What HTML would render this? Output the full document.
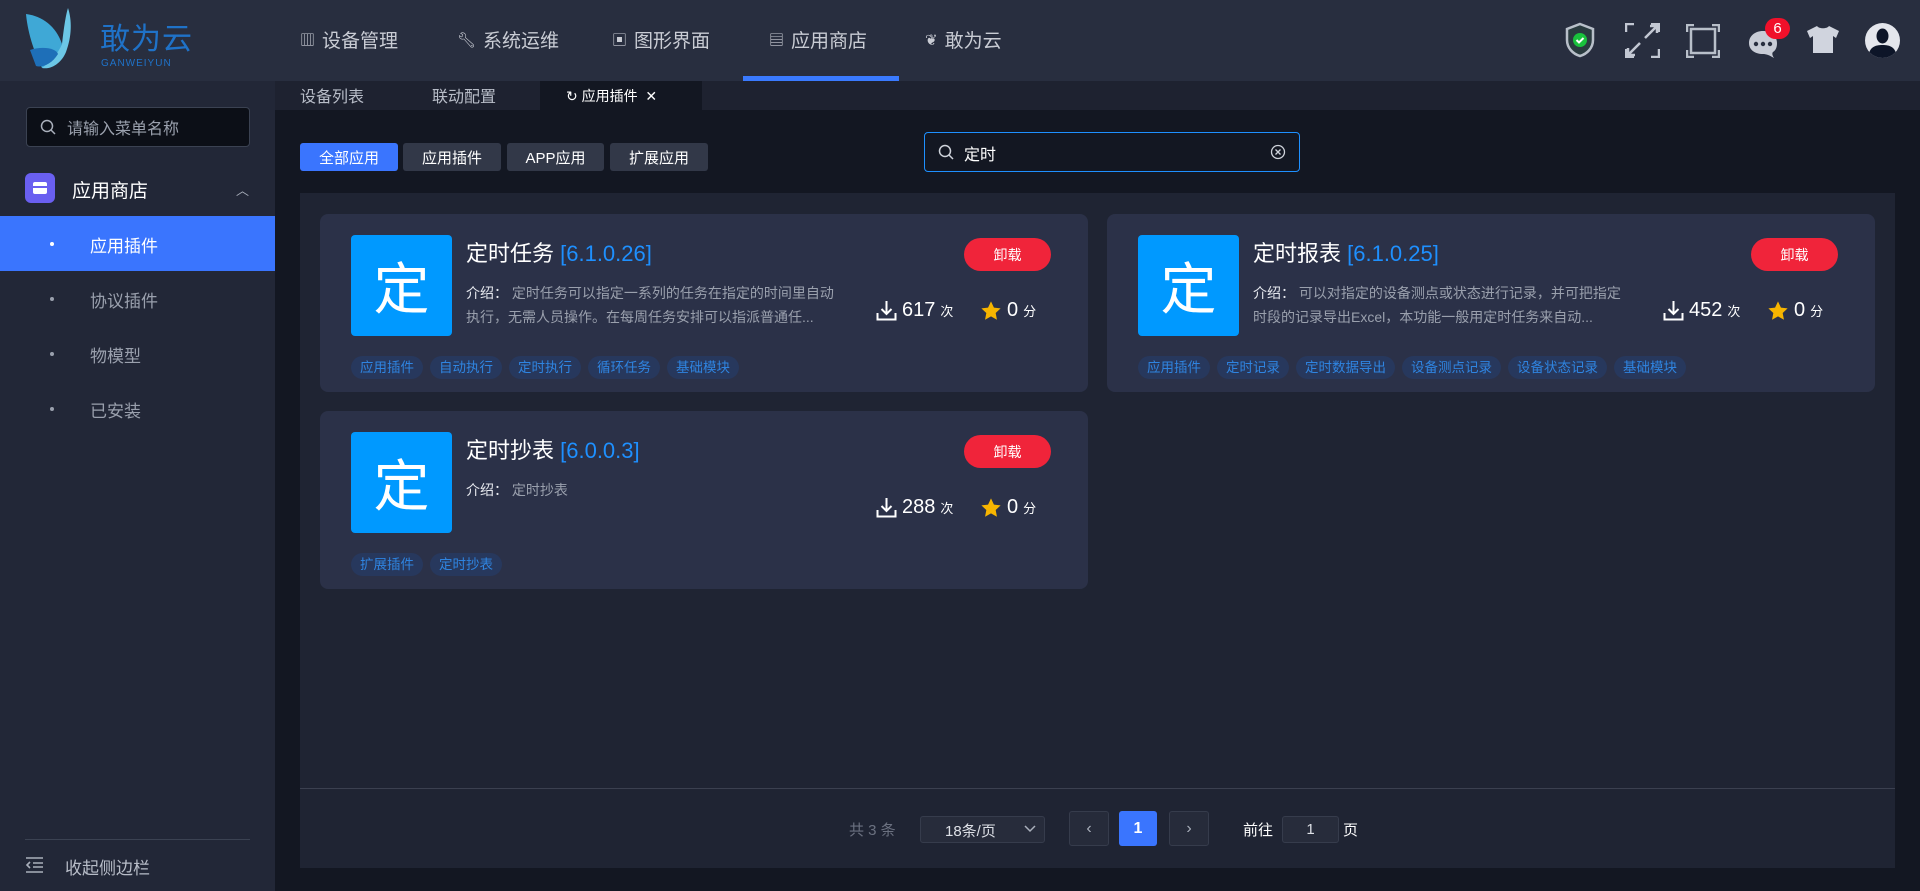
<!DOCTYPE html>
<html><head><meta charset="utf-8">
<style>
*{margin:0;padding:0;box-sizing:border-box}
body{width:1920px;height:891px;overflow:hidden;background:#131722;font-family:"Liberation Sans","Noto Sans CJK SC",sans-serif;color:#fff;position:relative}
.abs{position:absolute}
.top{left:0;top:0;width:1920px;height:81px;background:#282e3f}
.nav{top:26px;font-size:19px;color:#c9ccd4;display:flex;align-items:center;gap:7px}
.side{left:0;top:81px;width:275px;height:810px;background:#222737}
.tabs{left:275px;top:81px;width:1645px;height:29px;background:#1e2230}
.panel{left:300px;top:193px;width:1595px;height:675px;background:#1f2433}
.btn{top:143px;height:28px;border-radius:3px;font-size:15px;display:flex;align-items:center;justify-content:center;background:#323848;color:#fff}
.card{width:768px;height:178px;background:#2b3148;border-radius:8px}
.icon{left:31px;top:21px;width:101px;height:101px;background:#0099ff;border-radius:4px;font-size:56px;display:flex;align-items:center;justify-content:center;color:#fff}
.title{left:146px;top:22px;font-size:22px;white-space:nowrap}
.title span{color:#1e90ff}
.intro{left:146px;top:67px;width:368px;font-size:14px;line-height:24px;color:#9aa0ad}
.intro b{color:#e6e8ee;font-weight:normal}
.un{left:644px;top:24px;width:87px;height:33px;border-radius:17px;background:#f0243a;font-size:14px;display:flex;align-items:center;justify-content:center}
.stat{top:85px;display:flex;align-items:center;font-size:20px;gap:5px}
.stat small{font-size:13px}
.tags{left:31px;top:142px;display:flex;gap:7px}
.tags span{height:23px;line-height:23px;padding:0 9px;border-radius:12px;background:#27385d;color:#2f84e0;font-size:13.5px}
.si{left:50px;font-size:17px;color:#9aa0ad}
.dot{left:50px;width:4px;height:4px;border-radius:2px;background:#9aa0ad}
</style></head><body>
<div class="abs top"></div>
<svg class="abs" style="left:22px;top:6px" width="60" height="66" viewBox="0 0 60 66">
<path d="M4 8 C20 10 34 20 40 38 C36 50 28 60 20 62 C14 50 6 30 4 8Z" fill="#3fa8d6"/>
<path d="M40 38 C42 20 44 8 46 2 C50 14 50 30 44 46 C40 56 30 64 20 62 C28 56 36 48 40 38Z" fill="#6cc7e6"/>
<path d="M8 44 C20 40 34 42 36 48 C30 58 20 62 14 60Z" fill="#1e6fb8"/>
</svg>
<div class="abs" style="left:100px;top:14px;font-size:30px;color:#1f72c8;letter-spacing:1px">敢为云</div>
<div class="abs" style="left:101px;top:58px;font-size:10px;color:#1f72c8;letter-spacing:1px">GANWEIYUN</div>

<div class="abs nav" style="left:300px"><span style="font-size:15px">▥</span>设备管理</div>
<div class="abs nav" style="left:457px"><span style="font-size:15px">🔧︎</span>系统运维</div>
<div class="abs nav" style="left:612px"><span style="font-size:15px">▣</span>图形界面</div>
<div class="abs nav" style="left:769px"><span style="font-size:15px">▤</span>应用商店</div>
<div class="abs nav" style="left:925px"><span style="font-size:15px">❦</span>敢为云</div>
<div class="abs" style="left:743px;top:76px;width:156px;height:5px;background:#3a7afe"></div>

<svg class="abs" style="left:1564px;top:22px" width="32" height="36" viewBox="0 0 32 36"><path d="M16 2 L29 7 V18 C29 26 23 32 16 34 C9 32 3 26 3 18 V7Z" fill="#2a3b3f" stroke="#b8bfc9" stroke-width="2.5"/><circle cx="16" cy="18" r="7" fill="#19c23c"/><path d="M12.5 18 l2.5 2.5 l4.5 -4.5" stroke="#fff" stroke-width="2" fill="none"/></svg>
<svg class="abs" style="left:1625px;top:23px" width="35" height="35" viewBox="0 0 35 35" fill="none" stroke="#c2c7d2" stroke-width="2.5"><path d="M1 9V1h8M26 34h8v-8M1 26v8h8M34 9V1h-8"/><path d="M20 15L32 3M25 3h7v7M15 20L3 32M3 25v7h7"/></svg>
<svg class="abs" style="left:1686px;top:24px" width="34" height="34" viewBox="0 0 34 34" fill="none" stroke="#b8bfc9" stroke-width="2.5"><path d="M1 8V1h7M26 1h7v7M1 26v7h7M33 26v7h-7"/><rect x="5" y="5" width="24" height="24"/></svg>
<svg class="abs" style="left:1748px;top:30px" width="30" height="28" viewBox="0 0 30 28"><path d="M15 1C7 1 1 6 1 13c0 7 6 11 14 11 3 0 6 1 11 4-2-3-2-5-1-6 3-2 4-5 4-9C29 6 23 1 15 1z" fill="#c8ccd6"/><circle cx="8" cy="14" r="2.2" fill="#282e3f"/><circle cx="15" cy="14" r="2.2" fill="#282e3f"/><circle cx="22" cy="14" r="2.2" fill="#282e3f"/></svg>
<div class="abs" style="left:1765px;top:18px;width:25px;height:21px;border-radius:11px;background:#f0102a;font-size:15px;text-align:center;line-height:21px">6</div>
<svg class="abs" style="left:1806px;top:25px" width="34" height="29" viewBox="0 0 34 29"><path d="M11 1 C13 4 21 4 23 1 L33 6 L30 13 L27 11 V28 H7 V11 L4 13 L1 6Z" fill="#d0d4de"/></svg>
<svg class="abs" style="left:1865px;top:23px" width="35" height="35" viewBox="0 0 35 35"><circle cx="17.5" cy="17.5" r="17.5" fill="#e4e6ec"/><clipPath id="c"><circle cx="17.5" cy="17.5" r="17.5"/></clipPath><g clip-path="url(#c)" fill="#0d1528"><ellipse cx="17.5" cy="13" rx="6" ry="7.5"/><path d="M3 35 C4 24 10 22 17.5 22 C25 22 31 24 32 35Z"/></g></svg>

<div class="abs side"></div>
<div class="abs" style="left:26px;top:107px;width:224px;height:40px;border:1px solid #3b4252;border-radius:4px;background:#0c0f17"></div>
<svg class="abs" style="left:40px;top:119px" width="16" height="16" viewBox="0 0 16 16" fill="none" stroke="#aab0bc" stroke-width="1.5"><circle cx="7" cy="7" r="5.5"/><path d="M11 11l4 4"/></svg>
<div class="abs" style="left:67px;top:115px;font-size:16px;color:#9aa0ad">请输入菜单名称</div>
<div class="abs" style="left:25px;top:173px;width:30px;height:30px;border-radius:6px;background:#6a5ff0"></div>
<div class="abs" style="left:33px;top:182px;width:14px;height:12px;border-radius:2px;background:#fff"></div>
<div class="abs" style="left:33px;top:186px;width:14px;height:2px;background:#6a5ff0"></div>
<div class="abs" style="left:72px;top:176px;font-size:19px;color:#fff">应用商店</div>
<div class="abs" style="left:236px;top:180px;font-size:13px;color:#aab0bc">︿</div>
<div class="abs" style="left:0;top:216px;width:275px;height:55px;background:#3a75fe"></div>
<div class="dot abs" style="top:242px;background:#fff"></div>
<div class="si abs" style="left:90px;top:232px;color:#fff">应用插件</div>
<div class="dot abs" style="top:297px"></div><div class="si abs" style="left:90px;top:287px">协议插件</div>
<div class="dot abs" style="top:352px"></div><div class="si abs" style="left:90px;top:342px">物模型</div>
<div class="dot abs" style="top:407px"></div><div class="si abs" style="left:90px;top:397px">已安装</div>
<div class="abs" style="left:25px;top:839px;width:225px;height:1px;background:#3b4252"></div>
<svg class="abs" style="left:25px;top:857px" width="19" height="16" viewBox="0 0 19 16" stroke="#aab0bc" stroke-width="1.6" fill="none"><path d="M1 1h17M8 6h10M8 10h10M1 15h17M5 5l-3 3 3 3"/></svg>
<div class="abs" style="left:65px;top:854px;font-size:17px;color:#b8bdc8">收起侧边栏</div>

<div class="abs tabs"></div>
<div class="abs" style="left:300px;top:83px;font-size:16px;color:#b8bdc8">设备列表</div>
<div class="abs" style="left:432px;top:83px;font-size:16px;color:#b8bdc8">联动配置</div>
<div class="abs" style="left:540px;top:81px;width:162px;height:29px;background:#131722"></div>
<div class="abs" style="left:566px;top:86px;font-size:14px;color:#fff">↻ 应用插件 &nbsp;✕</div>

<div class="abs btn" style="left:300px;width:98px;background:#3a75fe">全部应用</div>
<div class="abs btn" style="left:403px;width:98px">应用插件</div>
<div class="abs btn" style="left:507px;width:97px">APP应用</div>
<div class="abs btn" style="left:610px;width:98px">扩展应用</div>
<div class="abs" style="left:924px;top:132px;width:376px;height:40px;border:1px solid #1e90ff;border-radius:4px;background:#131722"></div>
<svg class="abs" style="left:938px;top:144px" width="16" height="16" viewBox="0 0 16 16" fill="none" stroke="#cfd3db" stroke-width="1.5"><circle cx="7" cy="7" r="5.5"/><path d="M11 11l4 4"/></svg>
<div class="abs" style="left:964px;top:141px;font-size:16px;color:#fff">定时</div>
<svg class="abs" style="left:1270px;top:144px" width="16" height="16" viewBox="0 0 16 16" fill="none" stroke="#cfd3db" stroke-width="1.3"><circle cx="8" cy="8" r="6.5"/><path d="M5.5 5.5l5 5M10.5 5.5l-5 5"/></svg>

<div class="abs panel"></div>

<div class="abs card" style="left:320px;top:214px">
 <div class="abs icon">定</div>
 <div class="abs title">定时任务 <span>[6.1.0.26]</span></div>
 <div class="abs intro"><b>介绍：</b> 定时任务可以指定一系列的任务在指定的时间里自动执行，无需人员操作。在每周任务安排可以指派普通任...</div>
 <div class="abs un">卸载</div>
 <div class="abs stat" style="left:556px"><svg width="21" height="21" viewBox="0 0 21 21" fill="none" stroke="#fff" stroke-width="2"><path d="M10.5 1v13M5.5 9l5 5 5-5M1.5 13v6.5h18V13"/></svg>617<small>次</small></div>
 <div class="abs stat" style="left:660px"><svg width="22" height="22" viewBox="0 0 24 24"><path d="M12 1.5l3.2 6.8 7.3.9-5.4 5 1.4 7.3L12 17.8l-6.5 3.7 1.4-7.3-5.4-5 7.3-.9z" fill="#f7b500"/></svg>0<small>分</small></div>
 <div class="abs tags"><span>应用插件</span><span>自动执行</span><span>定时执行</span><span>循环任务</span><span>基础模块</span></div>
</div>
<div class="abs card" style="left:1107px;top:214px">
 <div class="abs icon">定</div>
 <div class="abs title">定时报表 <span>[6.1.0.25]</span></div>
 <div class="abs intro"><b>介绍：</b> 可以对指定的设备测点或状态进行记录，并可把指定时段的记录导出Excel，本功能一般用定时任务来自动...</div>
 <div class="abs un">卸载</div>
 <div class="abs stat" style="left:556px"><svg width="21" height="21" viewBox="0 0 21 21" fill="none" stroke="#fff" stroke-width="2"><path d="M10.5 1v13M5.5 9l5 5 5-5M1.5 13v6.5h18V13"/></svg>452<small>次</small></div>
 <div class="abs stat" style="left:660px"><svg width="22" height="22" viewBox="0 0 24 24"><path d="M12 1.5l3.2 6.8 7.3.9-5.4 5 1.4 7.3L12 17.8l-6.5 3.7 1.4-7.3-5.4-5 7.3-.9z" fill="#f7b500"/></svg>0<small>分</small></div>
 <div class="abs tags"><span>应用插件</span><span>定时记录</span><span>定时数据导出</span><span>设备测点记录</span><span>设备状态记录</span><span>基础模块</span></div>
</div>
<div class="abs card" style="left:320px;top:411px">
 <div class="abs icon">定</div>
 <div class="abs title">定时抄表 <span>[6.0.0.3]</span></div>
 <div class="abs intro"><b>介绍：</b> 定时抄表</div>
 <div class="abs un">卸载</div>
 <div class="abs stat" style="left:556px"><svg width="21" height="21" viewBox="0 0 21 21" fill="none" stroke="#fff" stroke-width="2"><path d="M10.5 1v13M5.5 9l5 5 5-5M1.5 13v6.5h18V13"/></svg>288<small>次</small></div>
 <div class="abs stat" style="left:660px"><svg width="22" height="22" viewBox="0 0 24 24"><path d="M12 1.5l3.2 6.8 7.3.9-5.4 5 1.4 7.3L12 17.8l-6.5 3.7 1.4-7.3-5.4-5 7.3-.9z" fill="#f7b500"/></svg>0<small>分</small></div>
 <div class="abs tags"><span>扩展插件</span><span>定时抄表</span></div>
</div>

<div class="abs" style="left:300px;top:788px;width:1595px;height:1px;background:#3b4050"></div>
<div class="abs" style="left:849px;top:819px;font-size:15px;color:#6b7180">共 3 条</div>
<div class="abs" style="left:920px;top:816px;width:125px;height:27px;border:1px solid #363c4c;border-radius:3px;background:#272c3b;font-size:15px;color:#dde0e6;padding:3px 0 0 24px">18条/页</div>
<svg class="abs" style="left:1024px;top:825px" width="12" height="8" viewBox="0 0 12 8" fill="none" stroke="#aab0bc" stroke-width="1.5"><path d="M1 1l5 5 5-5"/></svg>
<div class="abs" style="left:1069px;top:811px;width:40px;height:35px;border:1px solid #363c4c;border-radius:3px;background:#262b3a;color:#aab0bc;text-align:center;line-height:33px;font-size:16px">‹</div>
<div class="abs" style="left:1119px;top:811px;width:38px;height:35px;border-radius:3px;background:#3a75fe;text-align:center;line-height:35px;font-size:16px;font-weight:bold">1</div>
<div class="abs" style="left:1169px;top:811px;width:40px;height:35px;border:1px solid #363c4c;border-radius:3px;background:#262b3a;color:#aab0bc;text-align:center;line-height:33px;font-size:16px">›</div>
<div class="abs" style="left:1243px;top:819px;font-size:15px;color:#fff">前往</div>
<div class="abs" style="left:1282px;top:816px;width:57px;height:27px;border:1px solid #363c4c;border-radius:3px;background:#272c3b;text-align:center;line-height:25px;font-size:15px;color:#dde0e6">1</div>
<div class="abs" style="left:1343px;top:819px;font-size:15px;color:#fff">页</div>
</body></html>
